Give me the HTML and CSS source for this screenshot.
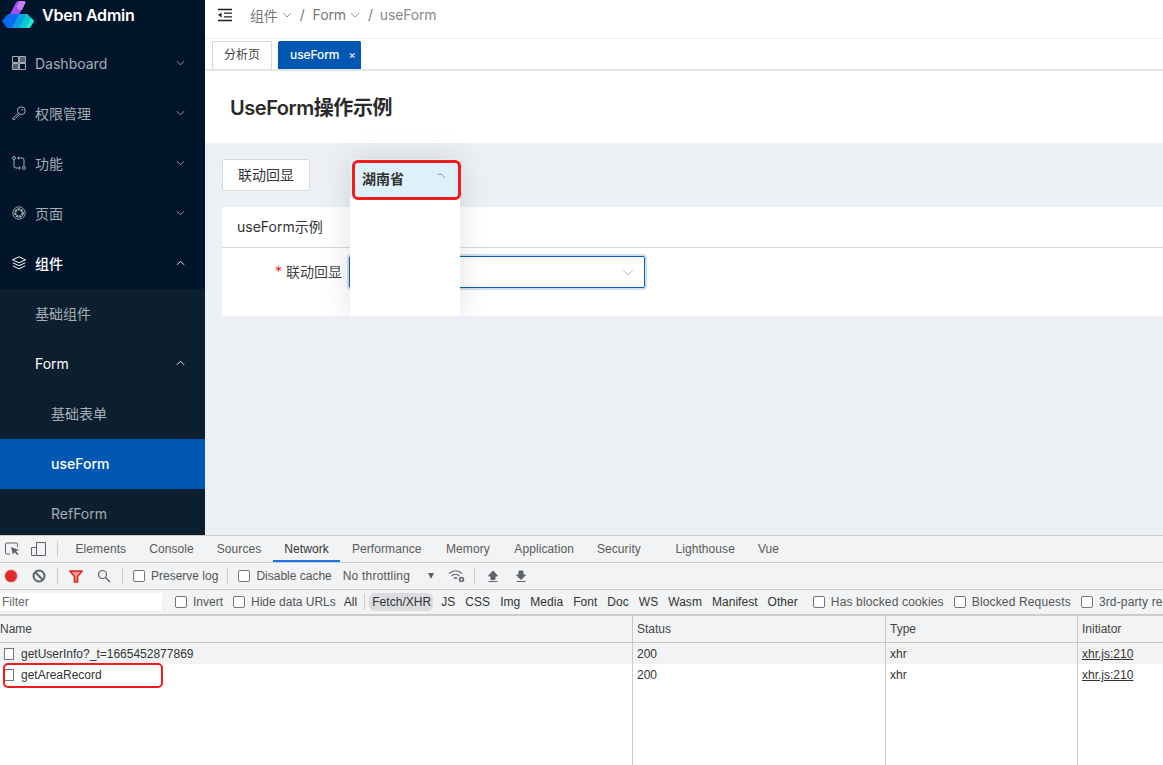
FILE: index.html
```html
<!DOCTYPE html>
<html lang="zh-CN">
<head>
    <meta charset="UTF-8">
    <title>UseForm操作示例</title>
    <link rel="stylesheet" href="styles.css">
</head>
<body>
    <div class="app">
        <aside class="sidebar">
            <div class="logo">
                <svg class="logo-mark" width="34" height="30" viewBox="0 0 34 30">
                    <path d="M10 14L16 2.500Q17 1 18.500 1H24Q26 1 25 3.500L19.500 14Z" fill="#a44df5"/>
                    <path d="M19.500 1H24Q26 1 25 3.500L22 10H18.500L16.500 6.500Z" fill="#c77dfb"/>
                    <path d="M8 14H27L34 21L29.500 28H7L2 21Z" fill="#0a6cf0"/>
                    <path d="M12 28L19 14H27L34 21L29.500 28Z" fill="#0d9fe0"/>
                    <path d="M19 28L26 14H27L34 21L29.500 28Z" fill="#0cc7cc"/>
                    <path d="M26 28L31 18L34 21L29.500 28Z" fill="#13f0d8"/>
                </svg>
                <span>Vben Admin</span>
            </div>
            <ul class="menu">
                <li class="menu-item">
                    <svg class="menu-icon" viewBox="0 0 14 14"><path d="M7.500.5h6v6h-6zM.5 7.500h6v6h-6z" fill="currentColor" opacity=".5"/><path d="M.5.5h6v6h-6zM7.500.5h6v6h-6zM.5 7.500h6v6h-6zM7.500 7.500h6v6h-6z" fill="none" stroke="currentColor"/></svg>
                    <span class="menu-label">Dashboard</span>
                    <svg class="chevron" viewBox="0 0 10 6"><path d="M1 1l4 4 4-4" /></svg>
                </li>
                <li class="menu-item">
                    <svg class="menu-icon" viewBox="0 0 14 14"><circle cx="9.300" cy="4.700" r="3.900" fill="none" stroke="currentColor"/><circle cx="10.300" cy="3.700" r=".8" fill="currentColor"/><path d="M6.300 7.300L.8 12.300v1h2l.8-1 4-3.900" fill="none" stroke="currentColor"/></svg>
                    <span class="menu-label">权限管理</span>
                    <svg class="chevron" viewBox="0 0 10 6"><path d="M1 1l4 4 4-4" /></svg>
                </li>
                <li class="menu-item">
                    <svg class="menu-icon" viewBox="0 0 14 14"><circle cx="2" cy="2" r="1.500" fill="none" stroke="currentColor"/><circle cx="12" cy="12" r="1.500" fill="none" stroke="currentColor"/><path d="M2 3.500v6.500q0 2 2 2h3M12 10.500V4q0-2-2-2H7" fill="none" stroke="currentColor"/><path d="M7 10.300L9 12l-2 1.700zM7 .3L5 2l2 1.700z" fill="currentColor"/></svg>
                    <span class="menu-label">功能</span>
                    <svg class="chevron" viewBox="0 0 10 6"><path d="M1 1l4 4 4-4" /></svg>
                </li>
                <li class="menu-item">
                    <svg class="menu-icon" viewBox="0 0 14 14"><circle cx="7" cy="7" r="6.200" fill="none" stroke="currentColor"/><circle cx="7" cy="7" r="3.700" fill="none" stroke="currentColor" stroke-width="2.200" stroke-dasharray="2.400 .7"/></svg>
                    <span class="menu-label">页面</span>
                    <svg class="chevron" viewBox="0 0 10 6"><path d="M1 1l4 4 4-4" /></svg>
                </li>
                <li class="menu-item menu-open">
                    <svg class="menu-icon" viewBox="0 0 14 14"><path d="M7 .8L13.500 3.800 7 6.800.5 3.800zM.8 6.800L7 9.700l6.200-2.900M.8 9.800L7 12.900l6.200-3.100" fill="none" stroke="currentColor"/></svg>
                    <span class="menu-label">组件</span>
                    <svg class="chevron" viewBox="0 0 10 6"><path d="M1 5l4-4 4 4" /></svg>
                </li>
                <li class="menu-item sub">
                    <span class="menu-label">基础组件</span>
                </li>
                <li class="menu-item sub menu-open">
                    <span class="menu-label">Form</span>
                    <svg class="chevron" viewBox="0 0 10 6"><path d="M1 5l4-4 4 4" /></svg>
                </li>
                <li class="menu-item sub deep">
                    <span class="menu-label">基础表单</span>
                </li>
                <li class="menu-item sub deep menu-active">
                    <span class="menu-label">useForm</span>
                </li>
                <li class="menu-item sub deep">
                    <span class="menu-label">RefForm</span>
                </li>
            </ul>
        </aside>
        <main class="main">
            <header class="topbar">
                <svg class="fold" width="16" height="14" viewBox="0 0 16 14"><path d="M1 1.500h14M7 5.200h8M7 8.800h8M1 12.500h14" stroke="#222" stroke-width="1.300"/><path d="M4.500 4.500v5L1 7z" fill="#222"/></svg>
                <nav class="crumbs">
                    <span>组件</span>
                    <svg class="crumb-arrow" viewBox="0 0 10 6"><path d="M1 1l4 4 4-4" /></svg>
                    <span class="crumb-sep">/</span>
                    <span>Form</span>
                    <svg class="crumb-arrow" viewBox="0 0 10 6"><path d="M1 1l4 4 4-4" /></svg>
                    <span class="crumb-sep crumb-sep-last">/</span>
                    <span class="crumb-last">useForm</span>
                </nav>
            </header>
            <div class="tabs">
                <div class="tab">分析页</div>
                <div class="tab tab-active">useForm <span class="tab-close">×</span></div>
            </div>
            <div class="page-head">
                <h1>UseForm操作示例</h1>
            </div>
            <div class="content">
                <button class="btn" type="button">联动回显</button>
                <section class="card">
                    <div class="card-title">useForm示例</div>
                    <div class="form-row">
                        <label class="form-label"><span class="req">*</span> 联动回显</label>
                        <div class="select">
                            <svg class="select-arrow" viewBox="0 0 12 7"><path d="M1 1l5 5 5-5" /></svg>
                        </div>
                    </div>
                </section>
            </div>
            <div class="cascader">
                <div class="cascader-item">
                    <span>湖南省</span>
                    <svg class="spin" width="10" height="10" viewBox="0 0 10 10"><path d="M2 1.500Q6.500 0 8.500 5" fill="none" stroke="#999" stroke-width="1"/></svg>
                </div>
            </div>
            <div class="mark mark-option"></div>
        </main>
    </div>

    <div class="devtools">
        <div class="dt-tabs">
            <svg class="dt-ico" width="15" height="16" viewBox="0 0 15 16"><path d="M5 13H1.500q-1 0-1-1V3q0-1 1-1h10q1 0 1 1v3" fill="none" stroke="#5f6368"/><path d="M6 6l8 3-3 1.200 2.500 3-1.200 1-2.500-3-2 2z" fill="#5f6368"/></svg>
            <svg class="dt-ico dt-ico-device" width="15" height="16" viewBox="0 0 15 16"><path d="M5.500 1.500h9v13h-9zM.5 6.500h5v8h-5z" fill="none" stroke="#5f6368"/></svg>
            <span class="dt-divider"></span>
            <span class="dt-tab">Elements</span>
            <span class="dt-tab">Console</span>
            <span class="dt-tab">Sources</span>
            <span class="dt-tab dt-tab-active">Network</span>
            <span class="dt-tab dt-more">Performance</span>
            <span class="dt-tab dt-more">Memory</span>
            <span class="dt-tab">Application</span>
            <span class="dt-tab dt-wide">Security</span>
            <span class="dt-tab">Lighthouse</span>
            <span class="dt-tab">Vue</span>
        </div>
        <div class="dt-toolbar">
            <span class="rec"></span>
            <svg class="clear" width="14" height="14" viewBox="0 0 14 14"><circle cx="7" cy="7" r="5.500" fill="none" stroke="#5f6368" stroke-width="2"/><path d="M3 3l8 8" stroke="#5f6368" stroke-width="2"/></svg>
            <span class="dt-divider"></span>
            <svg width="14" height="13" viewBox="0 0 14 13"><path d="M1 1.200h12L8.500 6.500V12h-3V6.500z" fill="#f2a09a" stroke="#d93025" stroke-width="1.700"/></svg>
            <svg class="search" width="14" height="14" viewBox="0 0 14 14"><circle cx="5.500" cy="5.500" r="4" fill="none" stroke="#5f6368" stroke-width="1.200"/><path d="M8.500 8.500l4.500 4.500" stroke="#5f6368" stroke-width="1.400"/></svg>
            <span class="dt-divider"></span>
            <label class="check"><span class="box"></span>Preserve log</label>
            <span class="dt-divider tight"></span>
            <label class="check"><span class="box"></span>Disable cache</label>
            <span class="throttle">No throttling</span>
            <span class="tri"></span>
            <svg class="wifi" width="18" height="14" viewBox="0 0 18 14"><path d="M1 4.500Q7.500-1 14 4.500M3.500 7Q7.500 3.500 11.500 7M6 9.500Q7.500 8 9 9.500" fill="none" stroke="#5f6368" stroke-width="1.200"/><circle cx="13.500" cy="10.500" r="2" fill="none" stroke="#5f6368" stroke-width="1.500"/></svg>
            <span class="dt-divider tighter"></span>
            <svg class="updown" width="12" height="13" viewBox="0 0 12 13"><path d="M6 1l4.500 5H8v3.500H4V6H1.500zM1.500 11.500h9" fill="#5f6368" stroke="#5f6368"/></svg>
            <svg class="updown" width="12" height="13" viewBox="0 0 12 13"><path d="M4 1h4v4h2.500L6 9.500 1.500 5H4zM1.500 11.500h9" fill="#5f6368" stroke="#5f6368"/></svg>
        </div>
        <div class="dt-filter">
            <div class="filter-input">Filter</div>
            <label class="check"><span class="box"></span>Invert</label>
            <label class="check"><span class="box"></span>Hide data URLs</label>
            <span class="type type-all">All</span>
            <span class="dt-divider"></span>
            <span class="type type-active">Fetch/XHR</span>
            <span class="type">JS</span>
            <span class="type">CSS</span>
            <span class="type">Img</span>
            <span class="type">Media</span>
            <span class="type">Font</span>
            <span class="type">Doc</span>
            <span class="type">WS</span>
            <span class="type">Wasm</span>
            <span class="type">Manifest</span>
            <span class="type">Other</span>
            <label class="check check-far"><span class="box"></span>Has blocked cookies</label>
            <label class="check"><span class="box"></span>Blocked Requests</label>
            <label class="check"><span class="box"></span>3rd-party requests</label>
        </div>
        <div class="net-table">
            <div class="net-row net-head">
                <div class="col-name">Name</div>
                <div class="col-status">Status</div>
                <div class="col-type">Type</div>
                <div class="col-init">Initiator</div>
            </div>
            <div class="net-row net-odd">
                <div class="col-name"><span class="doc"></span>getUserInfo?_t=1665452877869</div>
                <div class="col-status">200</div>
                <div class="col-type">xhr</div>
                <div class="col-init"><u>xhr.js:210</u></div>
            </div>
            <div class="net-row">
                <div class="col-name"><span class="doc"></span>getAreaRecord</div>
                <div class="col-status">200</div>
                <div class="col-type">xhr</div>
                <div class="col-init"><u>xhr.js:210</u></div>
            </div>
            <div class="net-row net-fill">
                <div class="col-name"></div>
                <div class="col-status"></div>
                <div class="col-type"></div>
                <div class="col-init"></div>
            </div>
            <div class="mark mark-request"></div>
        </div>
    </div>
</body>
</html>
```

FILE: styles.css
```css
* {
    box-sizing: border-box;
}
html, body {
    margin: 0;
    padding: 0;
    height: 765px;
    overflow: hidden;
}
body {
    font-family: Inter, "Noto Sans CJK SC", sans-serif;
    font-size: 14px;
    color: #333;
    background: #fff;
}
.app {
    display: flex;
    height: 535px;
    overflow: hidden;
}

/* sidebar */
.sidebar {
    width: 205px;
    flex-shrink: 0;
    background: #001529;
    color: #a6adb4;
}
.logo {
    display: flex;
    align-items: flex-start;
    height: 39px;
    color: #fff;
    font-size: 16px;
    line-height: 30px;
    font-weight: 600;
    letter-spacing: -0.2px;
}
.logo-mark {
    margin-right: 8px;
}
.menu {
    list-style: none;
    margin: 0;
    padding: 0;
}
.menu-item {
    display: flex;
    align-items: center;
    height: 50px;
    padding: 0 0 2px 12px;
}
.menu-icon {
    width: 14px;
    height: 14px;
    margin-right: 9px;
}
.menu-label {
    flex: 1;
}
.chevron {
    width: 9px;
    height: 6px;
    margin-right: 20px;
    fill: none;
    stroke: currentColor;
    stroke-width: 1;
}
.menu-open {
    color: #fff;
    font-weight: 500;
}
.sub {
    background: #0c1f2e;
    padding-left: 35px;
    font-weight: 400;
}
.sub.deep {
    padding-left: 51px;
}
.menu-active {
    background: #0058b3;
    color: #fff;
    font-weight: 500;
}

/* main column */
.main {
    flex: 1;
    min-width: 0;
    display: flex;
    flex-direction: column;
    position: relative;
}
.topbar {
    display: flex;
    align-items: center;
    height: 39px;
    padding: 0 0 9px 12px;
    border-bottom: 1px solid #eee;
}
.fold {
    margin-right: 17px;
}
.crumbs {
    display: flex;
    align-items: center;
    color: #777;
    font-size: 14px;
    letter-spacing: -0.15px;
}
.crumb-arrow {
    width: 10px;
    height: 6px;
    margin-left: 4px;
    fill: none;
    stroke: #999;
    stroke-width: 1;
}
.crumb-sep {
    margin: 0 8px;
}
.crumb-sep-last {
    margin-right: 7px;
}
.crumb-last {
    color: #888;
}
.tabs {
    display: flex;
    gap: 6px;
    height: 32px;
    padding: 2px 0 0 7px;
    border-bottom: 2px solid #e4e4e4;
    flex-shrink: 0;
}
.tab {
    height: 28px;
    line-height: 26px;
    padding: 0 11px;
    font-size: 12px;
    color: #444;
    border: 1px solid #d9d9d9;
    border-bottom: none;
    border-radius: 2px 2px 0 0;
    background: #fff;
}
.tab-active {
    background: #0058b3;
    border-color: #0058b3;
    color: #fff;
    font-weight: 500;
    padding-right: 4px;
    letter-spacing: -0.1px;
}
.tab-close {
    font-size: 11px;
    margin-left: 6px;
    font-weight: 400;
}
.page-head {
    height: 72px;
    padding: 0 25px 2px;
    display: flex;
    align-items: center;
    flex-shrink: 0;
}
.page-head h1 {
    margin: 0;
    font-size: 20px;
    font-weight: 600;
    color: #2a2a2a;
    letter-spacing: -0.45px;
}
.content {
    flex: 1;
    background: #eceff3;
    padding: 16px 0 0 17px;
}
.btn {
    display: block;
    width: 88px;
    height: 32px;
    padding: 0 0 2px;
    font: inherit;
    font-size: 14px;
    color: #333;
    background: #fff;
    border: 1px solid #d9d9d9;
    border-radius: 2px;
}
.card {
    margin-top: 16px;
    height: 109px;
    background: #fff;
}
.card-title {
    height: 41px;
    line-height: 40px;
    padding-left: 15px;
    border-bottom: 1px solid #d9d9d9;
    color: #333;
}
.form-row {
    display: flex;
    align-items: center;
    padding-top: 8px;
}
.form-label {
    width: 127px;
    text-align: right;
    padding-right: 7px;
    color: #444;
    line-height: 30px;
}
.req {
    color: #f5222d;
}
.select {
    width: 296px;
    height: 32px;
    border: 1px solid #0960bd;
    border-radius: 2px;
    box-shadow: 0 0 0 2px rgba(9, 96, 189, 0.2);
    display: flex;
    align-items: center;
    justify-content: flex-end;
    padding-right: 10px;
    background: #fff;
}
.select-arrow {
    width: 12px;
    height: 7px;
    fill: none;
    stroke: #bfbfbf;
    stroke-width: 1;
}

/* dropdown over the form */
.cascader {
    position: absolute;
    left: 145px;
    top: 159px;
    width: 110px;
    height: 157px;
    background: #fff;
    box-shadow: 0 0 28px rgba(0, 0, 0, 0.12);
    clip-path: inset(-30px -30px 0 -30px);
}
.cascader-item {
    display: flex;
    align-items: center;
    justify-content: space-between;
    height: 38px;
    padding: 0 14px 0 12px;
    background: #dcf1fa;
    font-weight: 600;
    color: #333;
}
.mark {
    position: absolute;
    border: 3px solid #f5191c;
    border-radius: 6px;
}
.mark-option {
    left: 147px;
    top: 160px;
    width: 109px;
    height: 40px;
}

/* devtools */
.devtools {
    height: 230px;
    font-family: "Liberation Sans", Arial, sans-serif;
    font-size: 12px;
    color: #333;
    background: #f1f3f4;
    border-top: 1px solid #ccc;
}
.dt-tabs, .dt-toolbar, .dt-filter {
    display: flex;
    align-items: center;
    border-bottom: 1px solid #ccc;
    white-space: nowrap;
    overflow: hidden;
}
.dt-tabs {
    height: 27px;
    padding-left: 5px;
}
.dt-ico {
    flex-shrink: 0;
}
.dt-ico-device {
    margin-left: 11px;
}
.dt-divider {
    display: inline-block;
    width: 1px;
    height: 16px;
    background: #ccc;
    flex-shrink: 0;
}
.dt-tab {
    height: 26px;
    line-height: 26px;
    padding: 0 11.500px;
    color: #5a5a5a;
    letter-spacing: 0.08px;
}
.dt-tabs .dt-divider {
    margin: 0 6px 0 11px;
}
.dt-tab-active {
    color: #333;
    border-bottom: 2px solid #1a73e8;
}
.dt-more {
    margin-right: 1.500px;
}
.dt-wide {
    padding-right: 23px;
}
.dt-toolbar {
    height: 27px;
    padding-left: 5px;
    gap: 11px;
}
.rec {
    width: 12px;
    height: 12px;
    border-radius: 50%;
    background: #e02b27;
    box-shadow: 0 0 2px rgba(224, 43, 39, 0.6);
}
.clear {
    margin-left: 4px;
}
.search {
    margin-left: 3px;
}
.dt-toolbar .check {
    margin-left: -1px;
}
.tight {
    margin-left: -2px;
}
.tighter {
    margin-left: -3px;
}
.check {
    display: inline-flex;
    align-items: center;
    color: #555;
}
.box {
    width: 12px;
    height: 12px;
    margin-right: 6px;
    background: #fff;
    border: 1px solid #767676;
    border-radius: 2px;
    flex-shrink: 0;
}
.throttle {
    color: #555;
    letter-spacing: 0.2px;
}
.tri {
    width: 0;
    height: 0;
    margin-left: 7px;
    border-left: 3.500px solid transparent;
    border-right: 3.500px solid transparent;
    border-top: 6px solid #5f6368;
}
.wifi {
    margin-left: 3px;
}
.updown {
    margin-left: 1px;
}
.updown + .updown {
    margin-left: 5px;
}
.dt-filter {
    height: 26px;
    gap: 10px;
    border-bottom: 2px solid #ccc;
}
.filter-input {
    width: 162px;
    height: 18px;
    line-height: 19px;
    padding-left: 2px;
    margin-right: 3px;
    background: #fff;
    color: #666;
    flex-shrink: 0;
}
.check-far {
    margin-left: 5px;
}
.check-far, .check-far ~ .check {
    letter-spacing: 0.15px;
}
.type {
    color: #333;
    letter-spacing: 0.04px;
}
.type-all {
    margin-left: -2px;
}
.type-all + .dt-divider {
    margin-left: -3px;
}
.type-active {
    background: #dadce0;
    border-radius: 6px;
    padding: 2px 2px 2px 3px;
    margin: 0 -2px 0 -6px;
}
.net-table {
    position: relative;
}
.net-row {
    display: grid;
    grid-template-columns: 632px 253px 192px 1fr;
    height: 21px;
    line-height: 22px;
    background: #fff;
}
.net-row > div {
    padding-left: 4px;
    border-left: 1px solid #c8c8cc;
    overflow: hidden;
    white-space: nowrap;
}
.net-row > .col-name {
    padding-left: 0;
    border-left: none;
    display: flex;
    align-items: center;
}
.net-head {
    height: 27px;
    line-height: 27px;
    background: #f1f3f4;
    border-bottom: 1px solid #c8c8cc;
    color: #444;
}
.net-odd {
    background: #f1f3f4;
}
.net-fill {
    height: 80px;
}
.doc {
    width: 10px;
    height: 12px;
    margin: 0 7px 0 4px;
    border: 1px solid #777;
    background: #fff;
    flex-shrink: 0;
}
.mark-request {
    left: 3px;
    top: 47px;
    width: 160px;
    height: 25px;
    border-width: 2.500px;
    border-radius: 5px;
}
```
